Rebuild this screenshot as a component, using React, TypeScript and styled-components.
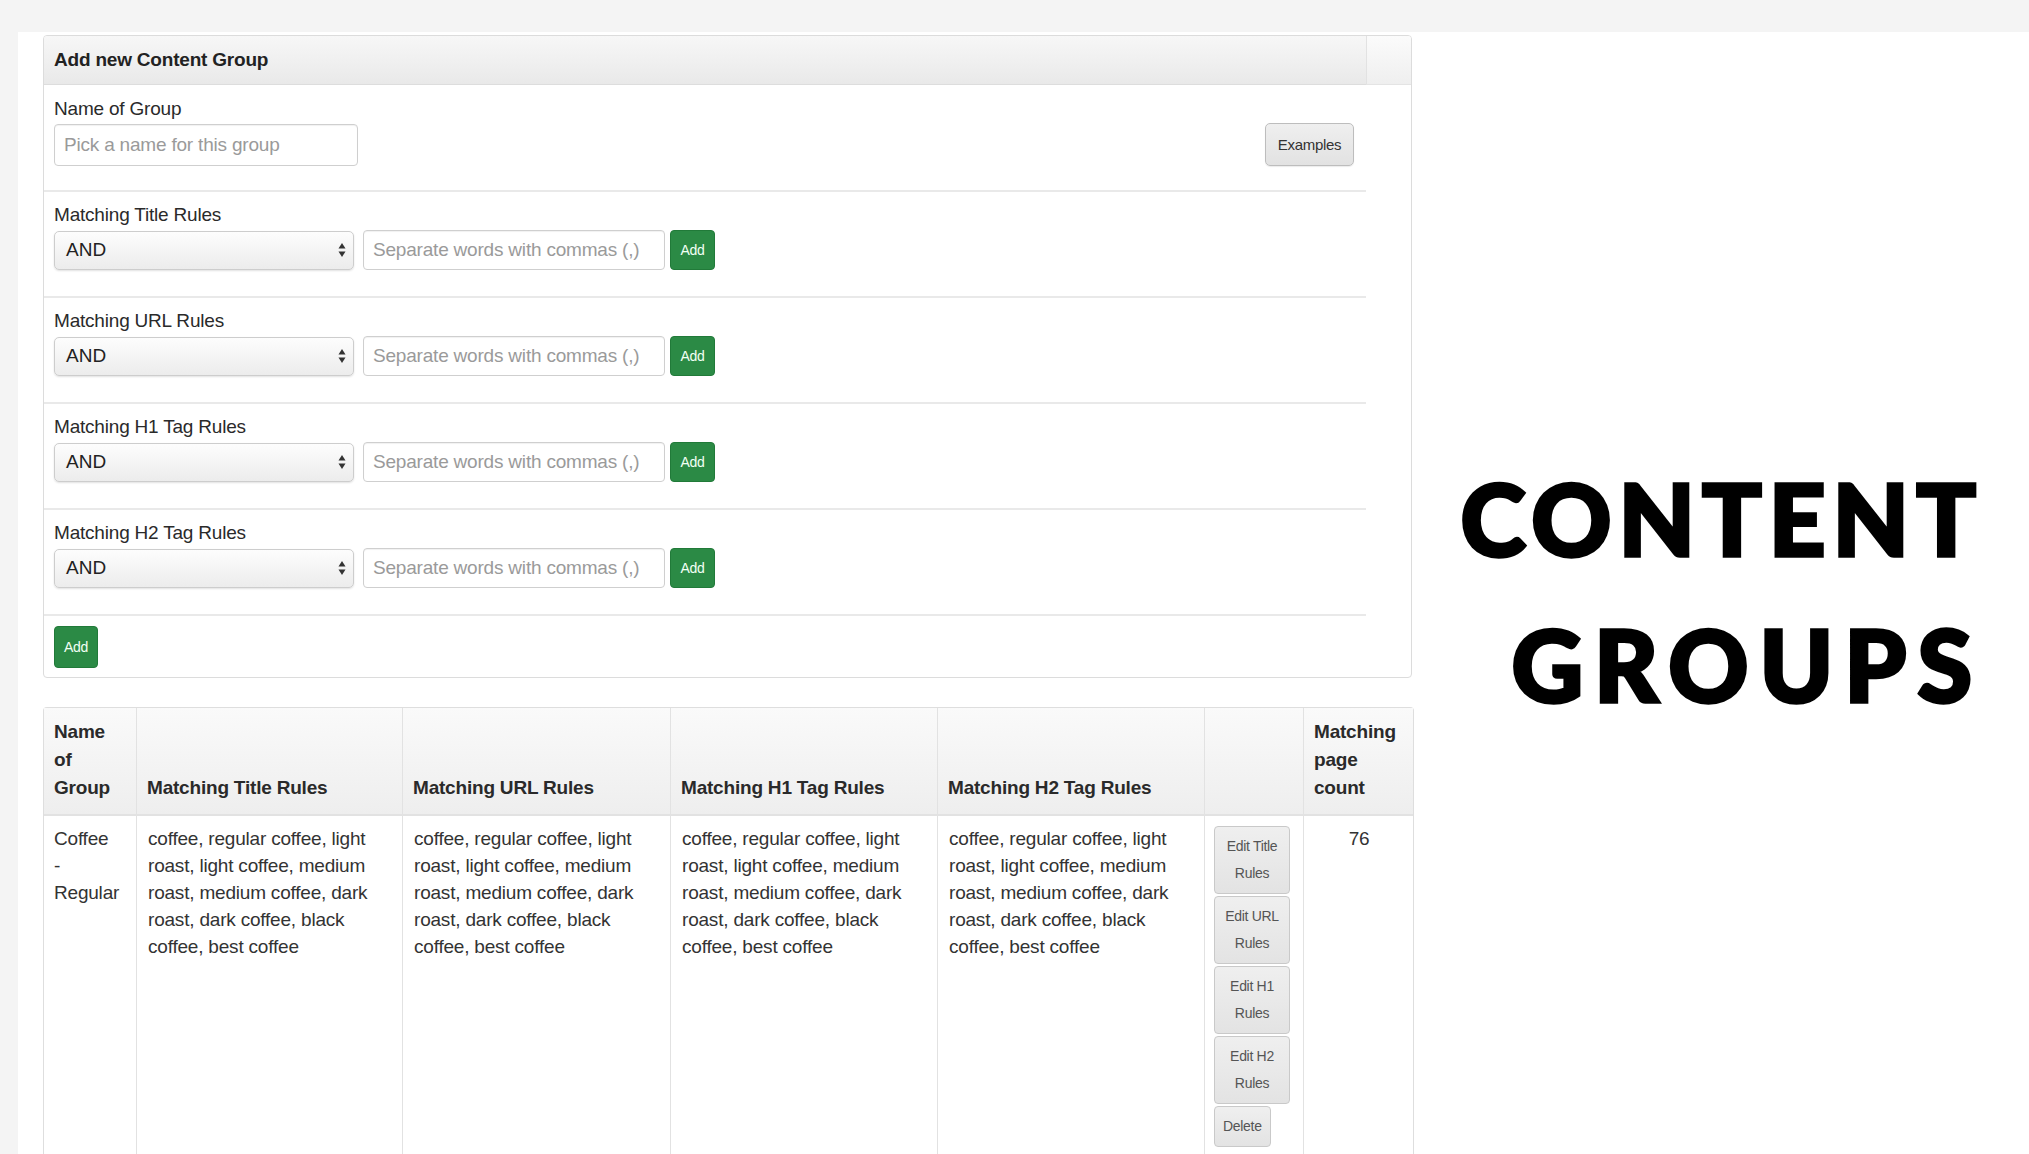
import React from "react";
import styled, { createGlobalStyle } from "styled-components";

const Global = createGlobalStyle`
  html, body { margin: 0; padding: 0; overflow: hidden; }
  body { font-family: "Liberation Sans", Arial, Helvetica, sans-serif; color: #333; background: #f4f4f4; }
  * { box-sizing: border-box; }
`;

const Page = styled.div`
  width: 2029px;
  height: 1154px;
  background: #f4f4f4;
  padding: 32px 0 0 18px;
  display: flex;
  overflow: hidden;
`;

const Canvas = styled.div`
  flex: 1;
  background: #fff;
  display: flex;
  align-items: flex-start;
  padding: 3px 0 0 25px;
  overflow: hidden;
`;

const LeftCol = styled.div`
  width: 1369px;
  flex: none;
  display: flex;
  flex-direction: column;
  gap: 29px;
`;

const Panel = styled.div`
  display: flex;
  border: 1px solid #dcdcdc;
  border-radius: 4px;
  background: #fff;
  overflow: hidden;
`;

const PanelMain = styled.div`
  flex: 1;
  display: flex;
  flex-direction: column;
`;

const PanelGutter = styled.div`
  width: 45px;
  flex: none;
`;

const GutterHead = styled.div`
  height: 49px;
  background: linear-gradient(#fbfbfb, #efefef);
  border-left: 1px solid #e2e2e2;
  border-bottom: 1px solid #e4e4e4;
`;

const PanelHeader = styled.div`
  height: 49px;
  display: flex;
  align-items: center;
  padding: 0 10px;
  font-size: 19px;
  font-weight: 700;
  color: #222;
  letter-spacing: -0.2px;
  background: linear-gradient(#f7f7f7, #e9e9e9);
  border-bottom: 1px solid #dddddd;
`;

const Section = styled.div<{ $first?: boolean; $last?: boolean }>`
  padding: ${(p) => (p.$first ? "10px 12px 24px 10px" : p.$last ? "10px 10px 9px" : "9px 10px 26px")};
  border-top: ${(p) => (p.$first ? "none" : "2px solid #e9e9e9")};
  display: ${(p) => (p.$first ? "flex" : "block")};
  justify-content: space-between;
  align-items: flex-end;
`;

const Field = styled.div`
  display: flex;
  flex-direction: column;
`;

const Label = styled.div`
  font-size: 19px;
  line-height: 27px;
  color: #2a2a2a;
  margin-bottom: 2px;
  letter-spacing: -0.2px;
`;

const TextInput = styled.input<{ $w: number; $h: number }>`
  width: ${(p) => p.$w}px;
  height: ${(p) => p.$h}px;
  border: 1px solid #cfcfcf;
  border-radius: 4px;
  padding: 0 9px;
  font-family: "Liberation Sans", Arial, sans-serif;
  font-size: 19px;
  letter-spacing: -0.2px;
  color: #333;
  background: #fff;
  box-shadow: inset 0 1px 1px rgba(0, 0, 0, 0.06);
  outline: none;
  &::placeholder { color: #9a9a9a; }
`;

const RuleRow = styled.div`
  display: flex;
  align-items: center;
`;

const SelectBox = styled.div`
  position: relative;
  width: 300px;
  height: 39px;
  margin-right: 9px;
  border: 1px solid #cdcdcd;
  border-radius: 5px;
  background: linear-gradient(#fdfdfd, #ececec);
  box-shadow: 0 1px 2px rgba(0, 0, 0, 0.12);
  display: flex;
  align-items: center;
  padding-left: 11px;
  font-size: 19px;
  color: #222;
`;

const SelectArrows = styled.svg`
  position: absolute;
  right: 6px;
  top: 50%;
  margin-top: -8px;
`;

const GreenButton = styled.button<{ $w: number; $h: number }>`
  width: ${(p) => p.$w}px;
  height: ${(p) => p.$h}px;
  margin-left: ${(p) => (p.$w === 45 ? 5 : 0)}px;
  border: 1px solid #217a39;
  border-radius: 4px;
  background: #2b8a45;
  color: #f2fff4;
  font-family: "Liberation Sans", Arial, sans-serif;
  font-size: 14px;
  padding: 0;
  letter-spacing: -0.3px;
`;

const GrayButton = styled.button`
  width: 89px;
  height: 43px;
  border: 1px solid #bdbdbd;
  border-radius: 5px;
  background: linear-gradient(#efefef, #e2e2e2);
  font-family: "Liberation Sans", Arial, sans-serif;
  font-size: 15px;
  color: #333;
  padding: 0;
  letter-spacing: -0.3px;
  box-shadow: 0 1px 1px rgba(0, 0, 0, 0.08);
`;

const Table = styled.table`
  width: 1369px;
  border-collapse: separate;
  border-spacing: 0;
  table-layout: fixed;
  border: 1px solid #dedede;
  border-bottom: none;
  border-radius: 4px 4px 0 0;
  font-size: 19px;
  line-height: 27px;
`;

const Th = styled.th`
  text-align: left;
  vertical-align: bottom;
  font-weight: 700;
  color: #2a2a2a;
  padding: 10px 10px 12px;
  line-height: 28px;
  letter-spacing: -0.2px;
  background: linear-gradient(#fafafa, #eeeeee);
  border-bottom: 2px solid #e2e2e2;
  border-left: 1px solid #e2e2e2;
  &:first-child { border-left: none; }
`;

const Td = styled.td<{ $center?: boolean; $tight?: boolean }>`
  vertical-align: top;
  padding: ${(p) => (p.$tight ? "9px 6px 0 9px" : "9px 10px 0 11px")};
  height: 345px;
  color: #333;
  letter-spacing: -0.2px;
  text-align: ${(p) => (p.$center ? "center" : "left")};
  border-left: 1px solid #e2e2e2;
  &:first-child { border-left: none; padding-left: 10px; }
`;

const ButtonStack = styled.div`
  display: flex;
  flex-direction: column;
  align-items: flex-start;
  gap: 2px;
  padding-top: 1px;
`;

const SmallButton = styled.button<{ $wide?: boolean }>`
  width: ${(p) => (p.$wide ? "76px" : "auto")};
  padding: 6px ${(p) => (p.$wide ? "5px" : "8px")};
  border: 1px solid #c9c9c9;
  border-radius: 4px;
  background: linear-gradient(#efefef, #e3e3e3);
  font-family: "Liberation Sans", Arial, sans-serif;
  font-size: 14px;
  line-height: 27px;
  color: #555;
  letter-spacing: -0.3px;
  text-align: center;
`;

const RightCol = styled.div`
  flex: 1;
  display: flex;
  flex-direction: column;
  align-items: flex-end;
  padding: 410px 49px 0 0;
`;

const BigTitle = styled.div`
  display: flex;
  flex-direction: column;
  align-items: flex-end;
  font-family: "Lato", "Liberation Sans", sans-serif;
  font-weight: 900;
  font-size: 99px;
  line-height: 146px;
  color: #000;
  -webkit-text-stroke: 3.5px #000;
`;

const TitleLine = styled.span<{ $spacing: number }>`
  letter-spacing: ${(p) => p.$spacing}px;
  margin-right: -3px;
`;

const Arrows = () => (
  <SelectArrows width="10" height="16" viewBox="0 0 10 16">
    <path d="M5 1 L8.5 6.5 H1.5 Z" fill="#333" />
    <path d="M5 15 L8.5 9.5 H1.5 Z" fill="#333" />
  </SelectArrows>
);

const rules = ["Matching Title Rules", "Matching URL Rules", "Matching H1 Tag Rules", "Matching H2 Tag Rules"];
const ruleText =
  "coffee, regular coffee, light roast, light coffee, medium roast, medium coffee, dark roast, dark coffee, black coffee, best coffee";

export default function App() {
  return (
    <>
      <Global />
      <Page>
        <Canvas>
          <LeftCol>
            <Panel>
              <PanelMain>
                <PanelHeader>Add new Content Group</PanelHeader>
                <Section $first>
                  <Field>
                    <Label>Name of Group</Label>
                    <TextInput $w={304} $h={42} placeholder="Pick a name for this group" />
                  </Field>
                  <GrayButton>Examples</GrayButton>
                </Section>
                {rules.map((r) => (
                  <Section key={r}>
                    <Label>{r}</Label>
                    <RuleRow>
                      <SelectBox>
                        AND
                        <Arrows />
                      </SelectBox>
                      <TextInput $w={302} $h={40} placeholder="Separate words with commas (,)" />
                      <GreenButton $w={45} $h={40}>Add</GreenButton>
                    </RuleRow>
                  </Section>
                ))}
                <Section $last>
                  <GreenButton $w={44} $h={42}>Add</GreenButton>
                </Section>
              </PanelMain>
              <PanelGutter>
                <GutterHead />
              </PanelGutter>
            </Panel>

            <Table>
              <colgroup>
                <col style={{ width: 92 }} />
                <col style={{ width: 266 }} />
                <col style={{ width: 268 }} />
                <col style={{ width: 267 }} />
                <col style={{ width: 267 }} />
                <col style={{ width: 99 }} />
                <col style={{ width: 110 }} />
              </colgroup>
              <thead>
                <tr>
                  <Th>Name of Group</Th>
                  <Th>Matching Title Rules</Th>
                  <Th>Matching URL Rules</Th>
                  <Th>Matching H1 Tag Rules</Th>
                  <Th>Matching H2 Tag Rules</Th>
                  <Th />
                  <Th>Matching page count</Th>
                </tr>
              </thead>
              <tbody>
                <tr>
                  <Td>
                    Coffee
                    <br />-<br />
                    Regular
                  </Td>
                  <Td>{ruleText}</Td>
                  <Td>{ruleText}</Td>
                  <Td>{ruleText}</Td>
                  <Td>{ruleText}</Td>
                  <Td $tight>
                    <ButtonStack>
                      <SmallButton $wide>Edit Title Rules</SmallButton>
                      <SmallButton $wide>Edit URL Rules</SmallButton>
                      <SmallButton $wide>Edit H1 Rules</SmallButton>
                      <SmallButton $wide>Edit H2 Rules</SmallButton>
                      <SmallButton>Delete</SmallButton>
                    </ButtonStack>
                  </Td>
                  <Td $center>76</Td>
                </tr>
              </tbody>
            </Table>
          </LeftCol>
          <RightCol>
            <BigTitle>
              <TitleLine $spacing={7}>CONTENT</TitleLine>
              <TitleLine $spacing={11}>GROUPS</TitleLine>
            </BigTitle>
          </RightCol>
        </Canvas>
      </Page>
    </>
  );
}
